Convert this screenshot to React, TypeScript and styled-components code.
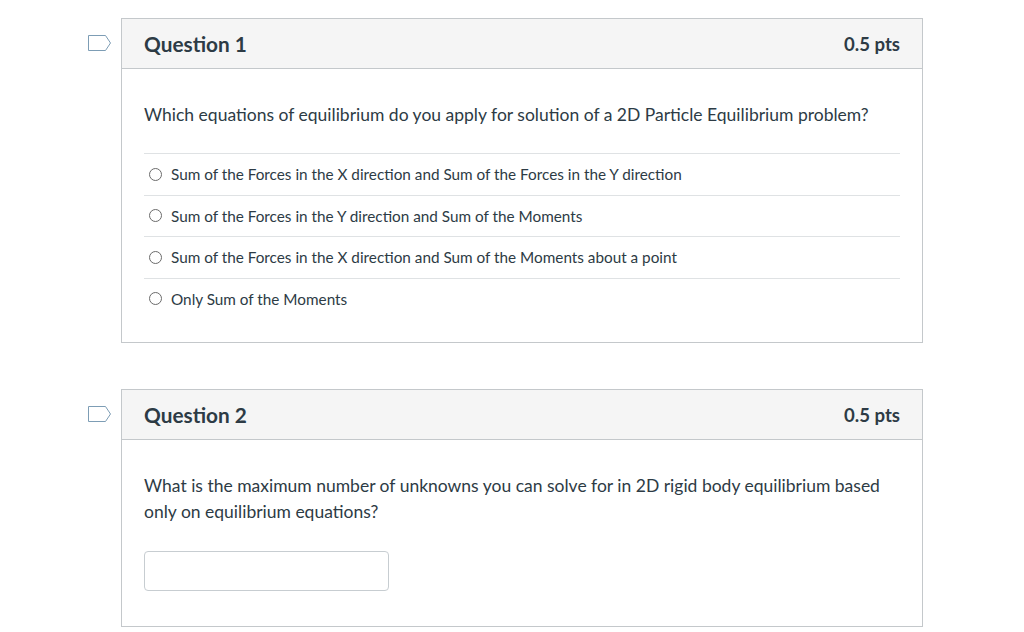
import React from "react";
import styled, { createGlobalStyle } from "styled-components";

const GlobalStyle = createGlobalStyle`
  body {
    margin: 0;
    background: #ffffff;
    font-family: Lato, "Liberation Sans", sans-serif;
    color: #2d3b45;
  }
`;

const Page = styled.div`
  display: flex;
  flex-direction: column;
  gap: 46px;
  padding: 18px 0 0 88px;
`;

const QuestionRow = styled.div`
  display: flex;
  align-items: flex-start;
`;

const FlagCol = styled.div`
  width: 33px;
  padding-top: 16px;
  flex-shrink: 0;
`;

const Card = styled.div`
  width: 800px;
  border: 1px solid #c4c8cb;
  background: #fff;
`;

const Header = styled.div`
  display: flex;
  justify-content: space-between;
  align-items: center;
  height: 49px;
  padding: 0 22px;
  background: #f5f5f5;
  border-bottom: 1px solid #c4c8cb;
`;

const Title = styled.h2`
  margin: 0;
  font-size: 20.8px;
  font-weight: 700;
  color: #2d3b45;
`;

const Points = styled.span`
  font-size: 18.6px;
  font-weight: 700;
  color: #2d3b45;
`;

const Body = styled.div<{ $top: number; $bottom: number }>`
  padding: ${(p) => p.$top}px 22px ${(p) => p.$bottom}px 22px;
`;

const Prompt = styled.p`
  margin: 0;
  font-size: 17.5px;
  line-height: 26px;
  color: #2d3b45;
`;

const Answers = styled.div`
  margin-top: 25px;
  border-top: 1px solid #dfe2e4;
`;

const Answer = styled.label`
  display: flex;
  align-items: center;
  gap: 9px;
  height: 40.5px;
  padding-left: 5px;
  font-size: 15.3px;
  color: #2d3b45;
  & + & {
    border-top: 1px solid #dfe2e4;
  }
`;

const Radio = styled.span`
  width: 11px;
  height: 11px;
  border: 1px solid #6b6b6b;
  border-radius: 50%;
  flex-shrink: 0;
`;

const TextInput = styled.input`
  display: block;
  margin-top: 26px;
  width: 245px;
  height: 40px;
  box-sizing: border-box;
  border: 1px solid #c7cdd1;
  border-radius: 4px;
  background: #fff;
`;

const Flag = () => (
  <svg width="24" height="18" viewBox="0 0 24 18">
    <path
      d="M0.5 1.5 H17.5 L22.5 9 L17.5 16.5 H0.5 Z"
      fill="none"
      stroke="#7d9db5"
      strokeWidth="1"
    />
  </svg>
);

const answers = [
  "Sum of the Forces in the X direction and Sum of the Forces in the Y direction",
  "Sum of the Forces in the Y direction and Sum of the Moments",
  "Sum of the Forces in the X direction and Sum of the Moments about a point",
  "Only Sum of the Moments",
];

export default function App() {
  return (
    <>
      <GlobalStyle />
      <Page>
        <QuestionRow>
          <FlagCol>
            <Flag />
          </FlagCol>
          <Card>
            <Header>
              <Title>Question 1</Title>
              <Points>0.5 pts</Points>
            </Header>
            <Body $top={33} $bottom={23}>
              <Prompt>
                Which equations of equilibrium do you apply for solution of a 2D
                Particle Equilibrium problem?
              </Prompt>
              <Answers>
                {answers.map((a) => (
                  <Answer key={a}>
                    <Radio />
                    {a}
                  </Answer>
                ))}
              </Answers>
            </Body>
          </Card>
        </QuestionRow>
        <QuestionRow>
          <FlagCol>
            <Flag />
          </FlagCol>
          <Card>
            <Header>
              <Title>Question 2</Title>
              <Points>0.5 pts</Points>
            </Header>
            <Body $top={33} $bottom={35}>
              <Prompt>
                What is the maximum number of unknowns you can solve for in 2D
                rigid body equilibrium based only on equilibrium equations?
              </Prompt>
              <TextInput type="text" />
            </Body>
          </Card>
        </QuestionRow>
      </Page>
    </>
  );
}
